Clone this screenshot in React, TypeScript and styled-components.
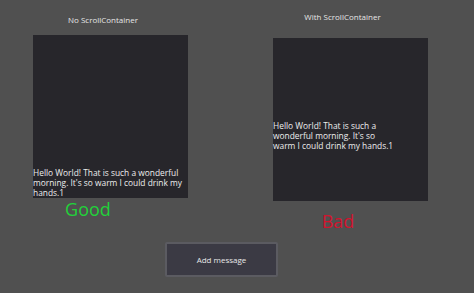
import React from "react";
import styled, { createGlobalStyle } from "styled-components";

const GlobalStyle = createGlobalStyle`
  html, body {
    margin: 0;
    padding: 0;
    background: #505050;
  }
  body {
    font-family: "Open Sans", "DejaVu Sans", sans-serif;
    color: #ececec;
  }
`;

const Screen = styled.div`
  width: 474px;
  height: 293px;
  background: #505050;
  display: flex;
  flex-direction: column;
  overflow: hidden;
`;

const Columns = styled.div`
  display: flex;
  gap: 85px;
  padding-left: 33px;
`;

const Column = styled.div<{ $top: number }>`
  width: 155px;
  display: flex;
  flex-direction: column;
  padding-top: ${(p) => p.$top}px;
`;

const Title = styled.div<{ $shift: number; $gap: number }>`
  font-size: 8px;
  line-height: 10px;
  text-align: center;
  color: #e6e6e6;
  padding-right: ${(p) => p.$shift}px;
  margin-bottom: ${(p) => p.$gap}px;
  white-space: nowrap;
`;

const Panel = styled.div<{ $scroll?: boolean }>`
  height: 163px;
  background: #27262b;
  display: flex;
  flex-direction: column;
  justify-content: ${(p) => (p.$scroll ? "flex-start" : "flex-end")};
  padding-top: ${(p) => (p.$scroll ? 83 : 0)}px;
  box-sizing: border-box;
`;

const Message = styled.p<{ $width: number }>`
  margin: 0;
  width: ${(p) => p.$width}px;
  font-size: 8.4px;
  line-height: 10px;
  color: #eeeeee;
`;

const Verdict = styled.div<{ $color: string; $shift: number; $gap: number }>`
  font-size: 18px;
  line-height: 20px;
  text-align: center;
  color: ${(p) => p.$color};
  padding-right: ${(p) => p.$shift}px;
  margin-top: ${(p) => p.$gap}px;
`;

const Footer = styled.div`
  display: flex;
  padding-left: 165px;
  margin-top: auto;
  margin-bottom: 16px;
`;

const Button = styled.button`
  width: 113px;
  height: 35px;
  box-sizing: border-box;
  background: #3b3a44;
  border: 2px solid #5b5b61;
  border-radius: 2px;
  color: #e8e8e8;
  font-family: "Open Sans", "DejaVu Sans", sans-serif;
  font-size: 8px;
  padding: 0;
`;

const text =
  "Hello World! That is such a wonderful morning. It's so warm I could drink my hands.1";

export default function App() {
  return (
    <>
      <GlobalStyle />
      <Screen>
        <Columns>
          <Column $top={15}>
            <Title $shift={15} $gap={10}>No ScrollContainer</Title>
            <Panel>
              <Message $width={155}>{text}</Message>
            </Panel>
            <Verdict $color="#22d13a" $shift={45} $gap={1}>Good</Verdict>
          </Column>
          <Column $top={12}>
            <Title $shift={16} $gap={16}>With ScrollContainer</Title>
            <Panel $scroll>
              <Message $width={121}>{text}</Message>
            </Panel>
            <Verdict $color="#d0142e" $shift={25} $gap={10}>Bad</Verdict>
          </Column>
        </Columns>
        <Footer>
          <Button>Add message</Button>
        </Footer>
      </Screen>
    </>
  );
}
